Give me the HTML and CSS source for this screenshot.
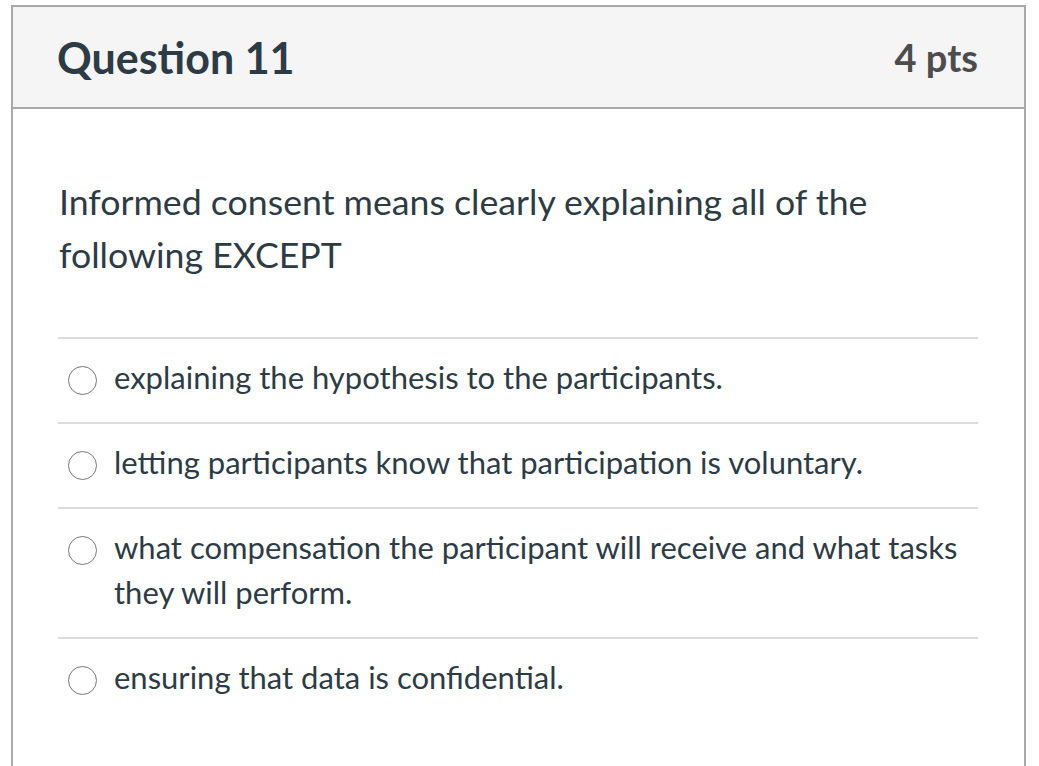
FILE: index.html
```html
<!DOCTYPE html>
<html>
<head>
<meta charset="utf-8">
<link rel="stylesheet" href="styles.css">
</head>
<body>
<div class="question">
  <div class="header">
    <h2 class="title">Question 11</h2>
    <div class="pts">4 pts</div>
  </div>
  <div class="content">
    <div class="text">Informed consent means clearly explaining all of the following EXCEPT</div>
    <div class="answers">
      <label class="answer"><span class="radio"></span><span class="label">explaining the hypothesis to the participants.</span></label>
      <label class="answer"><span class="radio"></span><span class="label">letting participants know that participation is voluntary.</span></label>
      <label class="answer"><span class="radio"></span><span class="label">what compensation the participant will receive and what tasks they will perform.</span></label>
      <label class="answer"><span class="radio"></span><span class="label">ensuring that data is confidential.</span></label>
    </div>
  </div>
</div>
</body>
</html>
```
FILE: styles.css
```css
html, body {
  margin: 0;
  padding: 0;
  background: #fff;
  overflow: hidden;
}
body {
  font-family: Lato, "Open Sans", sans-serif;
  color: #2d3b45;
  height: 766px;
}
.question {
  margin: 5px 0 0 11px;
  width: 1011px;
  height: 800px;
  border: 2px solid #a9a9a9;
  border-bottom: none;
}
.header {
  background: #f5f5f5;
  height: 100px;
  border-bottom: 2px solid #a9a9a9;
  display: flex;
  align-items: center;
  justify-content: space-between;
  padding: 0 46px 0 44px;
}
.title {
  margin: 0;
  font-size: 43px;
  font-weight: 700;
  color: #2d3b45;
}
.pts {
  font-size: 38px;
  font-weight: 700;
  color: #4d4d4d;
}
.content {
  padding: 66px 46px 0 45px;
}
.text {
  font-size: 35.7px;
  line-height: 53px;
  padding-bottom: 56px;
  padding-left: 1px;
}
.answers {
  border-top: 2px solid #dcdcdc;
}
.answer {
  display: flex;
  align-items: flex-start;
  gap: 17px;
  padding: 16px 0 22px 10px;
  border-bottom: 2px solid #dcdcdc;
  font-size: 31px;
  line-height: 45px;
}
.answer:last-child {
  border-bottom: none;
}
.radio {
  flex: none;
  width: 27px;
  height: 27px;
  border: 1px solid #777;
  border-radius: 50%;
  margin-top: 11px;
  background: #fff;
}
```
